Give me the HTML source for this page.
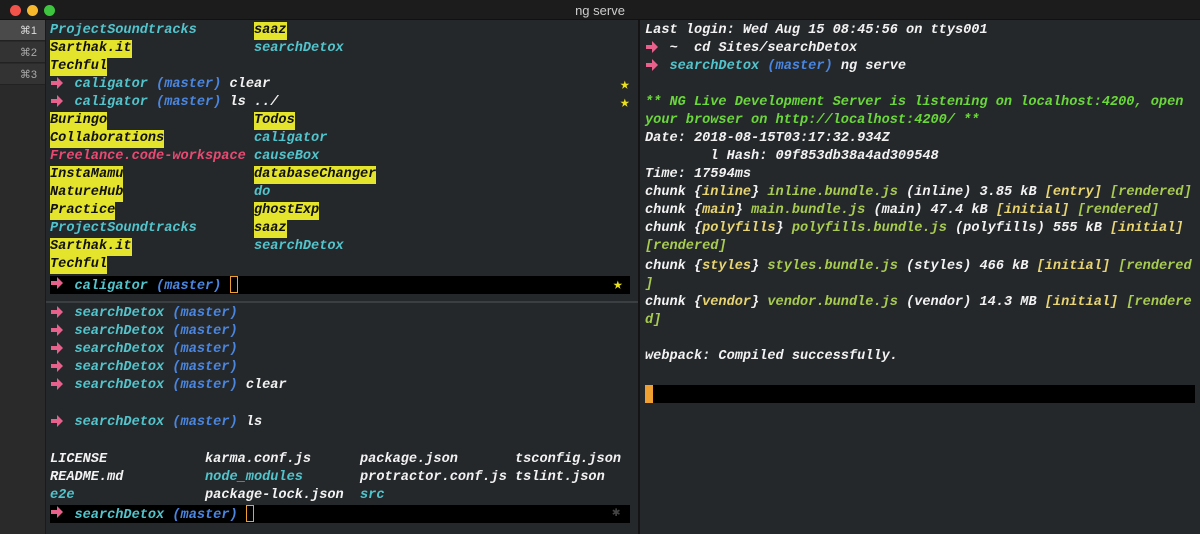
<!DOCTYPE html>
<html><head><meta charset="utf-8"><style>
*{margin:0;padding:0;box-sizing:border-box}
body{width:1200px;height:534px;background:#25282b;overflow:hidden;position:relative;font-family:"Liberation Mono",monospace;font-size:13.6px;font-style:italic;font-weight:bold;color:#f2f2f2}
.t{position:absolute;height:18px;line-height:18px;white-space:pre}
.c{color:#52c4cc}.b{color:#4a86e0}
.p{display:inline-block;width:8.17px;height:18px;vertical-align:top;position:relative}
.p::before{content:"";position:absolute;left:1px;top:5px;width:7px;height:4px;background:#e8608c}
.p::after{content:"";position:absolute;left:7px;top:1px;border-left:6px solid #e8608c;border-top:6px solid transparent;border-bottom:6px solid transparent}
.y{background:#e4e42c;color:#111;display:inline-block;height:18px}
.g{color:#6ad83a}.l{color:#a8cc50}.o{color:#e8d470}.r{color:#e84a72}
.bar{position:absolute;background:#000;height:18px}
.cur{display:inline-block;width:8px;height:17px;border:1.5px solid #f0a030;vertical-align:-4px}
</style></head><body>
<div style="position:absolute;left:0;top:0;width:1200px;height:20px;background:#1c1c1c;border-bottom:1px solid #111"></div>
<div style="position:absolute;left:10px;top:5px;width:11px;height:11px;border-radius:50%;background:#f2544c"></div>
<div style="position:absolute;left:27px;top:5px;width:11px;height:11px;border-radius:50%;background:#f8b82c"></div>
<div style="position:absolute;left:44px;top:5px;width:11px;height:11px;border-radius:50%;background:#3ec43e"></div>
<div style="position:absolute;left:0;top:3px;width:1200px;text-align:center;font:13px 'Liberation Sans',sans-serif;color:#ccc">ng serve</div>
<div style="position:absolute;left:0;top:20px;width:46px;height:514px;background:#2a2a2a;border-right:1px solid #1a1a1a"></div>
<div style="position:absolute;left:0;top:20px;width:45px;height:21px;background:#4a4a4a;border-bottom:1px solid #222;font:11px 'Liberation Sans',sans-serif;color:#ddd;text-align:right;padding:4px 8px 0 0">⌘1</div>
<div style="position:absolute;left:0;top:42px;width:45px;height:21px;background:#333;border-bottom:1px solid #222;font:11px 'Liberation Sans',sans-serif;color:#aaa;text-align:right;padding:4px 8px 0 0">⌘2</div>
<div style="position:absolute;left:0;top:64px;width:45px;height:21px;background:#333;border-bottom:1px solid #222;font:11px 'Liberation Sans',sans-serif;color:#aaa;text-align:right;padding:4px 8px 0 0">⌘3</div>
<div style="position:absolute;left:638px;top:20px;width:2px;height:514px;background:#141414"></div>
<div style="position:absolute;left:46px;top:301px;width:592px;height:2px;background:#3c3f42"></div>

<div class="t" style="left:50px;top:22px"><span class="c">ProjectSoundtracks</span>       <span class="y">saaz</span></div>
<div class="t" style="left:50px;top:40px"><span class="y">Sarthak.it</span>               <span class="c">searchDetox</span></div>
<div class="t" style="left:50px;top:58px"><span class="y">Techful</span></div>
<div class="t" style="left:50px;top:76px"><span class="p"></span>  <span class="c">caligator</span> <span class="b">(master)</span> clear</div>
<div class="t" style="left:50px;top:94px"><span class="p"></span>  <span class="c">caligator</span> <span class="b">(master)</span> ls ../</div>
<div class="t" style="left:620px;top:76px;color:#e8e020;font-style:normal;font-size:16px">★</div>
<div class="t" style="left:620px;top:94px;color:#e8e020;font-style:normal;font-size:16px">★</div>
<div class="t" style="left:50px;top:112px"><span class="y">Buringo</span>                  <span class="y">Todos</span></div>
<div class="t" style="left:50px;top:130px"><span class="y">Collaborations</span>           <span class="c">caligator</span></div>
<div class="t" style="left:50px;top:148px"><span class="r">Freelance.code-workspace</span> <span class="c">causeBox</span></div>
<div class="t" style="left:50px;top:166px"><span class="y">InstaMamu</span>                <span class="y">databaseChanger</span></div>
<div class="t" style="left:50px;top:184px"><span class="y">NatureHub</span>                <span class="c">do</span></div>
<div class="t" style="left:50px;top:202px"><span class="y">Practice</span>                 <span class="y">ghostExp</span></div>
<div class="t" style="left:50px;top:220px"><span class="c">ProjectSoundtracks</span>       <span class="y">saaz</span></div>
<div class="t" style="left:50px;top:238px"><span class="y">Sarthak.it</span>               <span class="c">searchDetox</span></div>
<div class="t" style="left:50px;top:256px"><span class="y">Techful</span></div>
<div class="bar" style="left:50px;top:276px;width:580px"></div>
<div class="t" style="left:50px;top:276px"><span class="p"></span>  <span class="c">caligator</span> <span class="b">(master)</span> <span class="cur"></span></div>
<div class="t" style="left:613px;top:276px;color:#e8e020;font-style:normal;font-size:16px">★</div>

<div class="t" style="left:50px;top:305px"><span class="p"></span>  <span class="c">searchDetox</span> <span class="b">(master)</span></div>
<div class="t" style="left:50px;top:323px"><span class="p"></span>  <span class="c">searchDetox</span> <span class="b">(master)</span></div>
<div class="t" style="left:50px;top:341px"><span class="p"></span>  <span class="c">searchDetox</span> <span class="b">(master)</span></div>
<div class="t" style="left:50px;top:359px"><span class="p"></span>  <span class="c">searchDetox</span> <span class="b">(master)</span></div>
<div class="t" style="left:50px;top:377px"><span class="p"></span>  <span class="c">searchDetox</span> <span class="b">(master)</span> clear</div>
<div class="t" style="left:50px;top:414px"><span class="p"></span>  <span class="c">searchDetox</span> <span class="b">(master)</span> ls</div>
<div class="t" style="left:50px;top:451px">LICENSE            karma.conf.js      package.json       tsconfig.json</div>
<div class="t" style="left:50px;top:469px">README.md          <span class="c">node_modules</span>       protractor.conf.js tslint.json</div>
<div class="t" style="left:50px;top:487px"><span class="c">e2e</span>                package-lock.json  <span class="c">src</span></div>
<div class="bar" style="left:50px;top:505px;width:580px"></div>
<div class="t" style="left:50px;top:505px"><span class="p"></span>  <span class="c">searchDetox</span> <span class="b">(master)</span> <span class="cur"></span></div>
<div class="t" style="left:612px;top:505px;color:#444;font-style:normal">✱</div>

<div class="t" style="left:645px;top:22px">Last login: Wed Aug 15 08:45:56 on ttys001</div>
<div class="t" style="left:645px;top:40px"><span class="p"></span>  ~  cd Sites/searchDetox</div>
<div class="t" style="left:645px;top:58px"><span class="p"></span>  <span class="c">searchDetox</span> <span class="b">(master)</span> ng serve</div>
<div class="t g" style="left:645px;top:94px">** NG Live Development Server is listening on localhost:4200, open</div>
<div class="t g" style="left:645px;top:112px">your browser on http://localhost:4200/ **</div>
<div class="t" style="left:645px;top:130px">Date: 2018-08-15T03:17:32.934Z</div>
<div class="t" style="left:645px;top:148px">        l Hash: 09f853db38a4ad309548</div>
<div class="t" style="left:645px;top:166px">Time: 17594ms</div>
<div class="t" style="left:645px;top:184px">chunk {<span class="o">inline</span>} <span class="l">inline.bundle.js</span> (inline) 3.85 kB <span class="o">[entry]</span> <span class="l">[rendered]</span></div>
<div class="t" style="left:645px;top:202px">chunk {<span class="o">main</span>} <span class="l">main.bundle.js</span> (main) 47.4 kB <span class="o">[initial]</span> <span class="l">[rendered]</span></div>
<div class="t" style="left:645px;top:220px">chunk {<span class="o">polyfills</span>} <span class="l">polyfills.bundle.js</span> (polyfills) 555 kB <span class="o">[initial]</span></div>
<div class="t l" style="left:645px;top:238px">[rendered]</div>
<div class="t" style="left:645px;top:258px">chunk {<span class="o">styles</span>} <span class="l">styles.bundle.js</span> (styles) 466 kB <span class="o">[initial]</span> <span class="l">[rendered</span></div>
<div class="t l" style="left:645px;top:276px">]</div>
<div class="t" style="left:645px;top:294px">chunk {<span class="o">vendor</span>} <span class="l">vendor.bundle.js</span> (vendor) 14.3 MB <span class="o">[initial]</span> <span class="l">[rendere</span></div>
<div class="t l" style="left:645px;top:312px">d]</div>
<div class="t" style="left:645px;top:348px">webpack: Compiled successfully.</div>
<div class="bar" style="left:645px;top:385px;width:550px"></div>
<div style="position:absolute;left:645px;top:385px;width:8px;height:18px;background:#f0a030"></div>
</body></html>
